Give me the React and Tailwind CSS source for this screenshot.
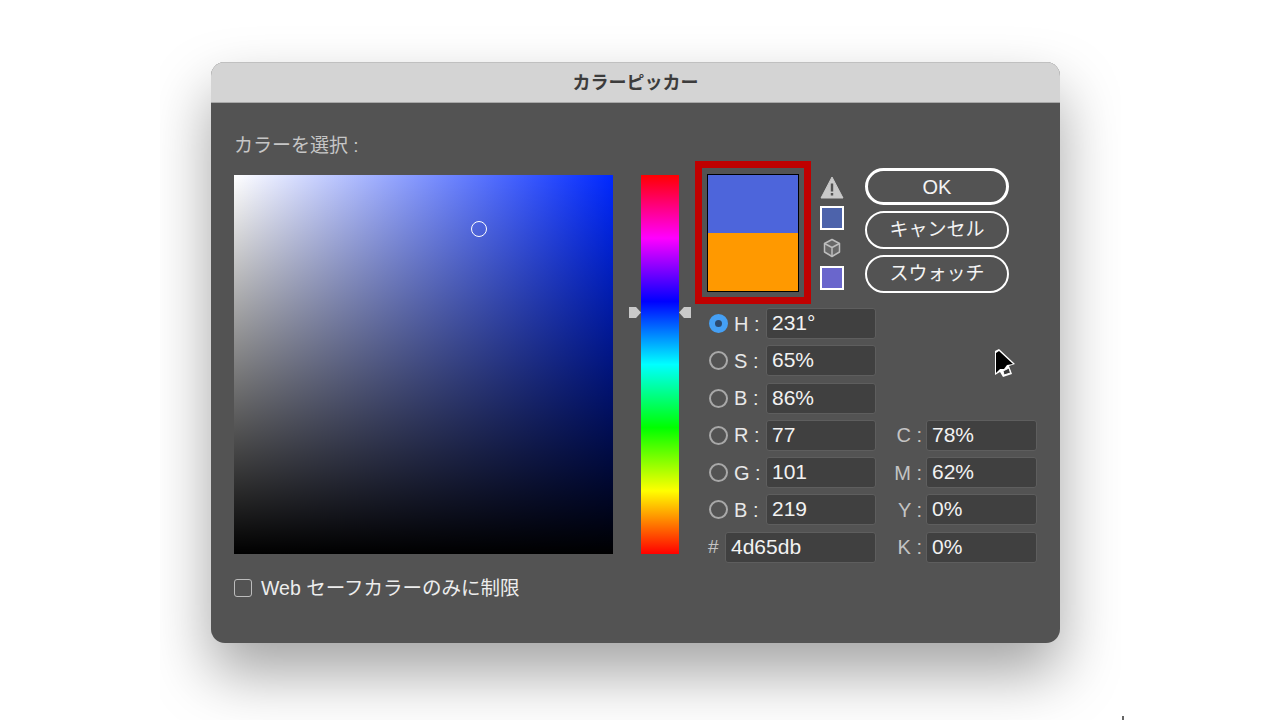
const jp = { fontFamily: '"Liberation Sans", "Noto Sans CJK JP", sans-serif' };

const Radio = ({ on }) =>
  on ? (
    <span className="w-[19px] h-[19px] rounded-full border-[6px] border-[#45a0f5] bg-[#2c4a70] shrink-0" />
  ) : (
    <span className="w-[19px] h-[19px] rounded-full border-2 border-[#a8a8a8] shrink-0" />
  );

const Field = ({ value, className }) => (
  <div className={`h-[31px] rounded-[3px] border border-[#5e5e5e] bg-[#404040] pl-[5px] text-[21px] leading-[28px] text-[#f2f2f2] ${className}`}>
    {value}
  </div>
);

const Row = ({ label, value, on }) => (
  <div className="flex items-center h-[31px]">
    <Radio on={on} />
    <span className="w-[38px] pl-[6px] text-[20px] text-[#e8e8e8] whitespace-pre">{label} :</span>
    <Field value={value} className="w-[110px]" />
  </div>
);

const CmykRow = ({ label, value }) => (
  <div className="flex items-center h-[31px]">
    <span className="w-[34px] text-right pr-[4px] text-[20px] text-[#c4c4c4] whitespace-pre">{label} :</span>
    <Field value={value} className="w-[111px]" />
  </div>
);

const Button = ({ children, primary }) => (
  <div className={`w-[144px] rounded-full flex items-center justify-center text-[#f4f4f4] border-white ${primary ? 'h-[37px] border-[3px] text-[20px] pt-[1px]' : 'h-[38px] border-2 text-[19px]'}`}>
    {children}
  </div>
);

export default function App() {
  return (
    <div className="relative w-[1280px] h-[720px] bg-white overflow-hidden" style={jp}>
      <div className="ml-[160px] w-[961px] h-[720px] overflow-hidden pt-[62px] pl-[51px]">
        <div className="relative w-[849px] h-[581px] rounded-[14px] bg-[#535353] shadow-[0_30px_60px_rgba(0,0,0,0.36)] overflow-hidden">
          <div className="h-[41px] pt-[1px] bg-[#d4d4d4] border-t border-[#c0c0c0] border-b border-b-[#a8a8a8] flex items-center justify-center text-[18px] font-bold text-[#3c3c3c]">
            カラーピッカー
          </div>

          <div className="pl-[23px] pt-[30px]">
            <div className="h-[42px] text-[19px] leading-[26px] text-[#c6c6c6]">カラーを選択 :</div>

            <div className="flex items-start">
              {/* colour field */}
              <div className="relative w-[379px] h-[379px] bg-[linear-gradient(to_bottom,rgba(0,0,0,0),#000),linear-gradient(to_right,#fff,#0028ff)]">
                <span className="absolute left-[237px] top-[46px] w-[16px] h-[16px] rounded-full border border-white" />
              </div>

              {/* hue strip */}
              <div className="relative ml-[28px] w-[38px] h-[379px] bg-[linear-gradient(to_bottom,#f00,#f0f_16.67%,#00f_33.33%,#0ff_50%,#0f0_66.67%,#ff0_83.33%,#f00)]">
                <svg className="absolute left-[-12px] top-[131px]" width="12" height="13" viewBox="0 0 12 13">
                  <path d="M0 1h7l5 5.5-5 5.5H0z" fill="#c9c9c9" />
                </svg>
                <svg className="absolute right-[-12px] top-[131px]" width="12" height="13" viewBox="0 0 12 13">
                  <path d="M12 1H5L0 6.5 5 12h7z" fill="#c9c9c9" />
                </svg>
              </div>

              <div className="ml-[28px] w-[330px]">
                <div className="flex items-start">
                  {/* before / after preview */}
                  <div className="relative w-[92px] h-[118px] mt-[-1px] border border-black flex flex-col shrink-0">
                    <div className="h-[58px] bg-[#4d65db]" />
                    <div className="flex-1 bg-[#ff9900]" />
                    <div className="absolute left-[-13px] right-[-13px] top-[-14px] bottom-[-13px] border-[7px] border-[#c00000]" />
                  </div>

                  {/* gamut warnings */}
                  <div className="ml-[21px] w-[24px] flex flex-col items-center shrink-0">
                    <svg className="mt-[1px]" width="24" height="23" viewBox="0 0 24 23">
                      <path d="M12 1 L23 22 H1 Z" fill="#c9c9c9" stroke="#c9c9c9" strokeLinejoin="round" />
                      <rect x="10.8" y="7.5" width="2.4" height="8" fill="#535353" />
                      <rect x="10.8" y="17" width="2.4" height="2.5" fill="#535353" />
                    </svg>
                    <div className="mt-[7px] w-[24px] h-[24px] border-2 border-white bg-[#4d63ab]" />
                    <svg className="mt-[8px]" width="18" height="20" viewBox="0 0 18 20" fill="#686868" stroke="#bdbdbd" strokeWidth="1.5" strokeLinejoin="round">
                      <path d="M9 1.5 16.5 5.5V14L9 18.5 1.5 14V5.5Z" />
                      <path d="M1.5 5.5 9 9.5 16.5 5.5M9 9.5V18.5" fill="none" />
                    </svg>
                    <div className="mt-[8px] w-[24px] h-[24px] border-2 border-white bg-[#6a66cc]" />
                  </div>

                  {/* buttons */}
                  <div className="ml-[21px] mt-[-7px] flex flex-col gap-[6px] shrink-0">
                    <Button primary>OK</Button>
                    <Button>キャンセル</Button>
                    <Button>スウォッチ</Button>
                  </div>
                </div>

                <div className="mt-[15px] flex items-start">
                  <div className="flex flex-col gap-[6.3px] pl-[2px] w-[185px] shrink-0">
                    <Row on label="H" value="231°" />
                    <Row label="S" value="65%" />
                    <Row label="B" value="86%" />
                    <Row label="R" value="77" />
                    <Row label="G" value="101" />
                    <Row label="B" value="219" />
                    <div className="flex items-center h-[31px] ml-[-2px]">
                      <span className="w-[18px] pl-[1px] text-[19px] text-[#c4c4c4]">#</span>
                      <Field value="4d65db" className="w-[151px]" />
                    </div>
                  </div>
                  <div className="mt-[111.9px] flex flex-col gap-[6.3px] shrink-0">
                    <CmykRow label="C" value="78%" />
                    <CmykRow label="M" value="62%" />
                    <CmykRow label="Y" value="0%" />
                    <CmykRow label="K" value="0%" />
                  </div>
                </div>
              </div>
            </div>

            <div className="mt-[11px] flex items-center">
              <span className="w-[18px] h-[18px] rounded-[3px] border border-[#bcbcbc]" />
              <span className="ml-[9px] text-[19.5px] text-[#ededed]">Web セーフカラーのみに制限</span>
            </div>
          </div>

          {/* mouse pointer */}
          <svg className="absolute left-[782px] top-[286px]" width="24" height="31" viewBox="0 0 24 31">
            <path d="M2 3 6 1 22 16 16 18 19 26 10 29 7 24 2 27Z" fill="#fff" />
            <path d="M3 5 6 3 20 16 14 17 11 21 7 21 3 25Z" fill="#000" />
            <path d="M10 23 16 20 17.5 25 11 27Z" fill="#3a3a3a" stroke="#fff" />
          </svg>
        </div>
      </div>
      <span className="absolute left-[1122px] top-[716px] w-[2px] h-[4px] bg-[#666666]" />
    </div>
  );
}
